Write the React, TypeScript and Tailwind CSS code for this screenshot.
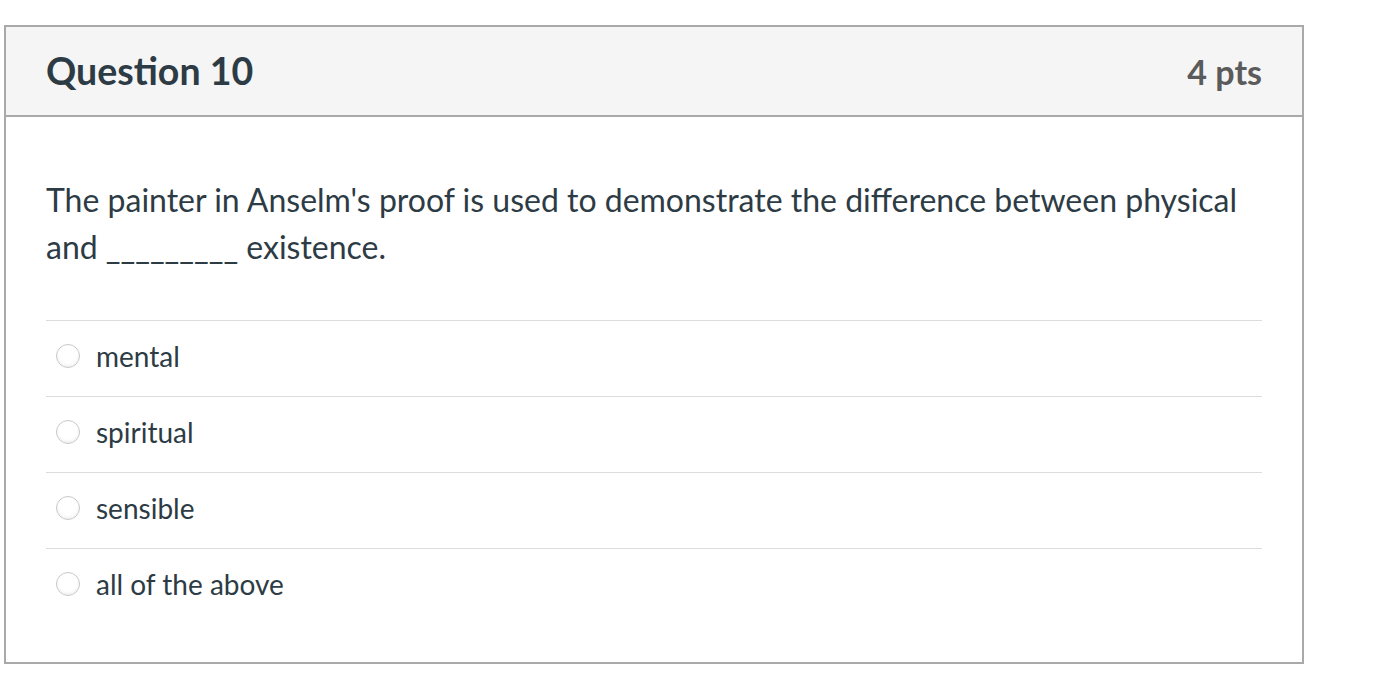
const answers = ["mental", "spiritual", "sensible", "all of the above"];

export default function App() {
  return (
    <div className="min-h-screen bg-white pl-[4px] pt-[25px] font-['Lato','Liberation_Sans',sans-serif]">
      <div className="w-[1300px] border-2 border-[#a9a9a9]">
        {/* header */}
        <div className="flex h-[90px] items-center justify-between border-b-2 border-[#a9a9a9] bg-[#f5f5f5] px-[40px]">
          <h2 className="text-[37.5px] font-bold text-[#2d3b45]">Question 10</h2>
          <span className="text-[34px] font-bold text-[#5b5b5b]">4 pts</span>
        </div>

        {/* body */}
        <div className="px-[40px] pt-[59px] pb-[38px]">
          <p className="text-[32px] leading-[47px] text-[#2d3b45]">
            The painter in Anselm's proof is used to demonstrate the difference between physical and _________ existence.
          </p>

          <div className="mt-[50px]">
            {answers.map((a) => (
              <label key={a} className="flex h-[76px] items-center gap-[16px] border-t border-[#dddddd] pb-[6px] pl-[10px]">
                <span className="h-[24px] w-[24px] rounded-full border border-[#c8c8c8] bg-white shadow-[inset_0_-2px_3px_rgba(0,0,0,0.06)]" />
                <span className="text-[28px] text-[#2d3b45]">{a}</span>
              </label>
            ))}
          </div>
        </div>
      </div>
    </div>
  );
}
